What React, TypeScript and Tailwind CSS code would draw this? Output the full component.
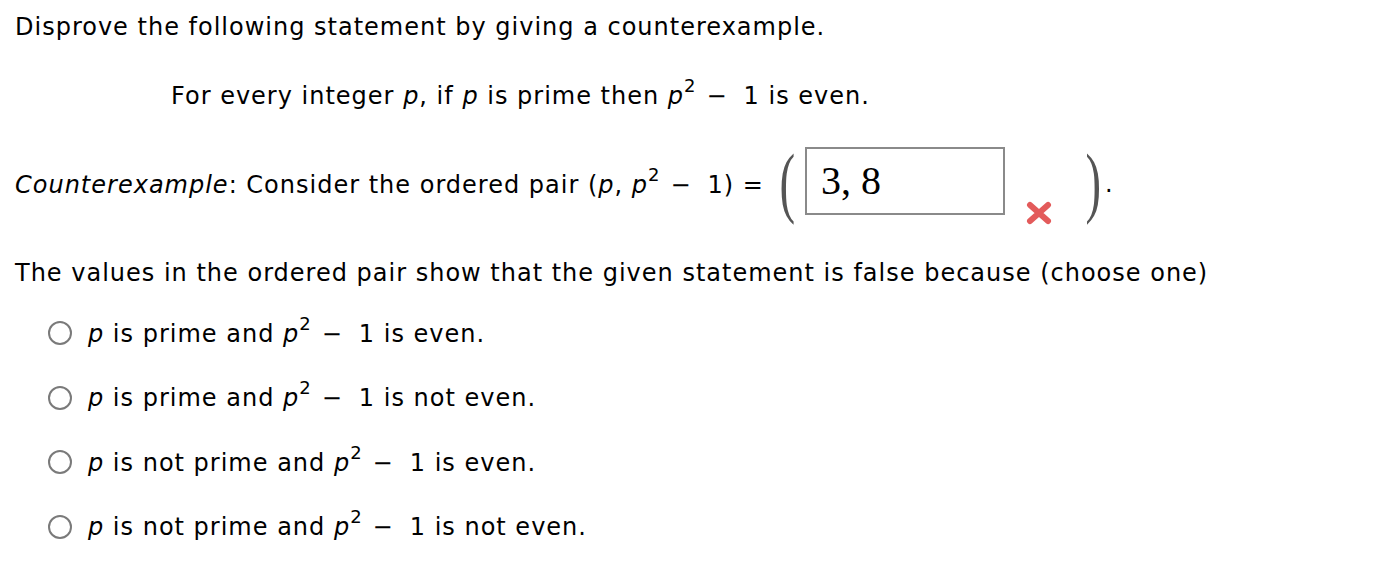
import React from "react";

const sans = { fontFamily: '"DejaVu Sans", Verdana, sans-serif' };
const serif = { fontFamily: '"Liberation Serif", "Times New Roman", serif' };

function Sq() {
  return <sup className="relative top-[-3px] align-super text-[18px] leading-none">2</sup>;
}

function Expr() {
  return (
    <>
      <i>p</i>
      <Sq />
      <span className="ml-[10px] mr-[16px]">−</span>1
    </>
  );
}

function Radio({ children }: { children: React.ReactNode }) {
  return (
    <label className="flex items-center h-[30px]">
      <span className="ml-[33px] mr-[16px] w-[24px] h-[24px] rounded-full border-2 border-[#7a7a7a] bg-white" />
      <span>{children}</span>
    </label>
  );
}

export default function App() {
  return (
    <div
      className="w-[1394px] h-[570px] bg-white text-black text-[24px] leading-[30px] tracking-[1px] px-[15px] pt-[12px]"
      style={sans}
    >
      <p>Disprove the following statement by giving a counterexample.</p>
      <p className="mt-[38px] ml-[156px]">
        For every integer <i>p</i>, if <i>p</i> is prime then <Expr /> is even.
      </p>
      <div className="mt-[33px] flex items-center h-[80px]">
        <span>
          <i>Counterexample</i>: Consider the ordered pair (<i>p</i>, <Expr />) =
        </span>
        <span className="ml-[10px] text-[78px] leading-[78px] text-[#555] scale-x-[0.6] -mt-[4px]" style={serif}>(</span>
        <div
          className="ml-[4px] -mt-[6px] w-[200px] h-[68px] border-2 border-[#8a8a8a] flex items-center pl-[14px] text-[40px] tracking-normal"
          style={serif}
        >
          3, 8
        </div>
        <span className="self-end translate-y-[2px] ml-[19px] w-[30px] h-[26px] flex items-center justify-center">
          <svg width="28" height="24" viewBox="0 0 28 24">
            <path d="M5 4 L23 20 M23 4 L5 20" stroke="#e35b5b" strokeWidth="6" strokeLinecap="round" />
          </svg>
        </span>
        <span className="ml-[26px] text-[78px] leading-[78px] text-[#555] scale-x-[0.6] -mt-[4px]" style={serif}>)</span>
        <span className="-ml-[2px]">.</span>
      </div>
      <p className="mt-[34px]">
        The values in the ordered pair show that the given statement is false because (choose one)
      </p>
      <div className="mt-[30px] flex flex-col gap-[34.5px]">
        <Radio>
          <i>p</i> is prime and <Expr /> is even.
        </Radio>
        <Radio>
          <i>p</i> is prime and <Expr /> is not even.
        </Radio>
        <Radio>
          <i>p</i> is not prime and <Expr /> is even.
        </Radio>
        <Radio>
          <i>p</i> is not prime and <Expr /> is not even.
        </Radio>
      </div>
    </div>
  );
}
